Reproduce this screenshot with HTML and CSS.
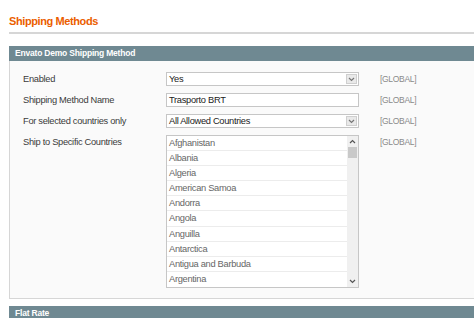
FILE: index.html
```html
<!DOCTYPE html>
<html>
  <head>
    <title>Shipping Methods</title>
    <link rel="stylesheet" href="styles.css">
  </head>
  <body>
    <div class="page">
      <h3 class="page-title">Shipping Methods</h3>
      <div class="rule"></div>

      <div class="section">
        <div class="section-head">Envato Demo Shipping Method</div>
        <div class="fieldset">
          <div class="form-grid">
            <label class="label">Enabled</label>
            <div class="select">
              <span>Yes</span>
              <span class="drop"><svg width="7" height="5" viewBox="0 0 7 5"><path d="M1 1 L3.5 3.5 L6 1" fill="none" stroke="#777" stroke-width="1.2"/></svg></span>
            </div>
            <span class="scope">[GLOBAL]</span>

            <label class="label">Shipping Method Name</label>
            <div class="input">Trasporto BRT</div>
            <span class="scope">[GLOBAL]</span>

            <label class="label">For selected countries only</label>
            <div class="select">
              <span>All Allowed Countries</span>
              <span class="drop"><svg width="7" height="5" viewBox="0 0 7 5"><path d="M1 1 L3.5 3.5 L6 1" fill="none" stroke="#777" stroke-width="1.2"/></svg></span>
            </div>
            <span class="scope">[GLOBAL]</span>

            <label class="label top">Ship to Specific Countries</label>
            <div class="multi">
              <div class="options">
                <div class="option">Afghanistan</div>
                <div class="option">Albania</div>
                <div class="option">Algeria</div>
                <div class="option">American Samoa</div>
                <div class="option">Andorra</div>
                <div class="option">Angola</div>
                <div class="option">Anguilla</div>
                <div class="option">Antarctica</div>
                <div class="option">Antigua and Barbuda</div>
                <div class="option">Argentina</div>
              </div>
              <div class="scrollbar">
                <span class="arrow"><svg width="7" height="5" viewBox="0 0 7 5"><path d="M1 4 L3.5 1.5 L6 4" fill="none" stroke="#555" stroke-width="1.2"/></svg></span>
                <span class="thumb"></span>
                <span class="track"></span>
                <span class="arrow"><svg width="7" height="5" viewBox="0 0 7 5"><path d="M1 1 L3.5 3.5 L6 1" fill="none" stroke="#555" stroke-width="1.2"/></svg></span>
              </div>
            </div>
            <span class="scope top">[GLOBAL]</span>
          </div>
        </div>
      </div>

      <div class="section">
        <div class="section-head">Flat Rate</div>
      </div>
    </div>
  </body>
</html>
```

FILE: styles.css
```css
body {
  margin: 0;
  overflow: hidden;
  font-family: "Liberation Sans", Arial, sans-serif;
  background: #fff;
}
.page {
  padding: 14px 0 0 9px;
  margin-right: -10px;
}
.page-title {
  margin: 0;
  font-size: 11px;
  line-height: 14px;
  letter-spacing: -0.4px;
  font-weight: bold;
  color: #eb5e00;
}
.rule {
  height: 2px;
  background: #d6d6d6;
  margin-top: 4px;
}
.section {
  margin-top: 12px;
}
.section + .section {
  margin-top: 7px;
}
.section-head {
  background: #6f8992;
  color: #fff;
  font-size: 8.5px;
  font-weight: bold;
  letter-spacing: -0.2px;
  line-height: 15px;
  padding-left: 6px;
}
.fieldset {
  background: #fafafa;
  border: 1px solid #d6d6d6;
  border-top: none;
  padding: 11px 0 10px 13px;
}
.form-grid {
  display: grid;
  grid-template-columns: 143px 193px auto;
  row-gap: 7px;
  align-items: center;
}
.label {
  font-size: 9.3px;
  letter-spacing: -0.3px;
  color: #3a3a3a;
}
.label.top,
.scope.top {
  align-self: start;
  padding-top: 2px;
}
.scope {
  margin-left: 21px;
  font-size: 8.5px;
  letter-spacing: -0.3px;
  color: #8a8a8a;
}
.select,
.input {
  height: 14px;
  box-sizing: border-box;
  border: 1px solid #c6c6c6;
  background: #fff;
  font-size: 9.3px;
  letter-spacing: -0.3px;
  color: #222;
  display: flex;
  align-items: center;
  justify-content: space-between;
  padding-left: 2px;
}
.drop {
  width: 11px;
  height: 10px;
  margin-right: 1px;
  background: #e9e9e9;
  border: 1px solid #cfcfcf;
  box-sizing: border-box;
  display: flex;
  align-items: center;
  justify-content: center;
}
.multi {
  height: 153px;
  box-sizing: border-box;
  border: 1px solid #c6c6c6;
  background: #fff;
  display: flex;
}
.options {
  flex: 1;
}
.option {
  height: 15.1px;
  box-sizing: border-box;
  border-bottom: 1px solid #ececec;
  padding-left: 2px;
  font-size: 9.3px;
  line-height: 14px;
  letter-spacing: -0.3px;
  color: #666;
}
.option:last-child {
  border-bottom: none;
}
.scrollbar {
  width: 11px;
  background: #f0f0f0;
  display: flex;
  flex-direction: column;
}
.arrow {
  height: 11px;
  display: flex;
  align-items: center;
  justify-content: center;
}
.thumb {
  height: 11px;
  margin: 0 1px;
  background: #c9c9c9;
}
.track {
  flex: 1;
}
```
